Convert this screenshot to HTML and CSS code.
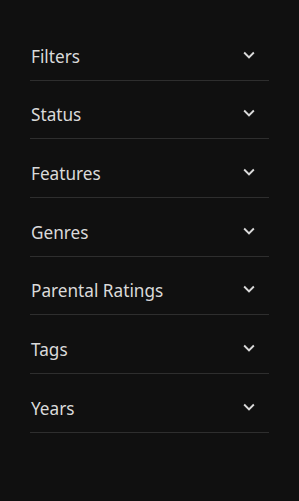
FILE: index.html
```html
<!DOCTYPE html>
<html lang="en">
<head>
    <meta charset="UTF-8">
    <meta name="viewport" content="width=device-width, initial-scale=1.0">
    <title>Filters</title>
    <link rel="stylesheet" href="styles.css">
</head>
<body>
    <div class="filter-panel">
        <div class="section">
            <button class="section-header">
                <span class="section-title">Filters</span>
                <svg class="chevron" viewBox="0 0 24 24"><path d="M16.59 8.59L12 13.17 7.41 8.59 6 10l6 6 6-6z"/></svg>
            </button>
        </div>
        <div class="section">
            <button class="section-header">
                <span class="section-title">Status</span>
                <svg class="chevron" viewBox="0 0 24 24"><path d="M16.59 8.59L12 13.17 7.41 8.59 6 10l6 6 6-6z"/></svg>
            </button>
        </div>
        <div class="section">
            <button class="section-header">
                <span class="section-title">Features</span>
                <svg class="chevron" viewBox="0 0 24 24"><path d="M16.59 8.59L12 13.17 7.41 8.59 6 10l6 6 6-6z"/></svg>
            </button>
        </div>
        <div class="section">
            <button class="section-header">
                <span class="section-title">Genres</span>
                <svg class="chevron" viewBox="0 0 24 24"><path d="M16.59 8.59L12 13.17 7.41 8.59 6 10l6 6 6-6z"/></svg>
            </button>
        </div>
        <div class="section">
            <button class="section-header">
                <span class="section-title">Parental Ratings</span>
                <svg class="chevron" viewBox="0 0 24 24"><path d="M16.59 8.59L12 13.17 7.41 8.59 6 10l6 6 6-6z"/></svg>
            </button>
        </div>
        <div class="section">
            <button class="section-header">
                <span class="section-title">Tags</span>
                <svg class="chevron" viewBox="0 0 24 24"><path d="M16.59 8.59L12 13.17 7.41 8.59 6 10l6 6 6-6z"/></svg>
            </button>
        </div>
        <div class="section">
            <button class="section-header">
                <span class="section-title">Years</span>
                <svg class="chevron" viewBox="0 0 24 24"><path d="M16.59 8.59L12 13.17 7.41 8.59 6 10l6 6 6-6z"/></svg>
            </button>
        </div>
    </div>
</body>
</html>
```

FILE: styles.css
```css
* {
    margin: 0;
    padding: 0;
    box-sizing: border-box;
    font-family: "Noto Sans", sans-serif;
}

body {
    background-color: #101010;
    color: #dadada;
    min-height: 100vh;
}

.filter-panel {
    padding: 22px 30px 0 30px;
}

.section {
    padding-top: 10.7px;
    border-bottom: 1px solid #2e2e2e;
}

.section-header {
    width: 100%;
    height: 47px;
    display: flex;
    align-items: center;
    justify-content: space-between;
    background: transparent;
    border: none;
    color: inherit;
    cursor: pointer;
    text-align: left;
}

.section-title {
    font-size: 17.2px;
    padding-left: 1px;
}

.chevron {
    width: 22px;
    height: 22px;
    fill: #dadada;
    margin-right: 9px;
    margin-top: -3px;
}
```
